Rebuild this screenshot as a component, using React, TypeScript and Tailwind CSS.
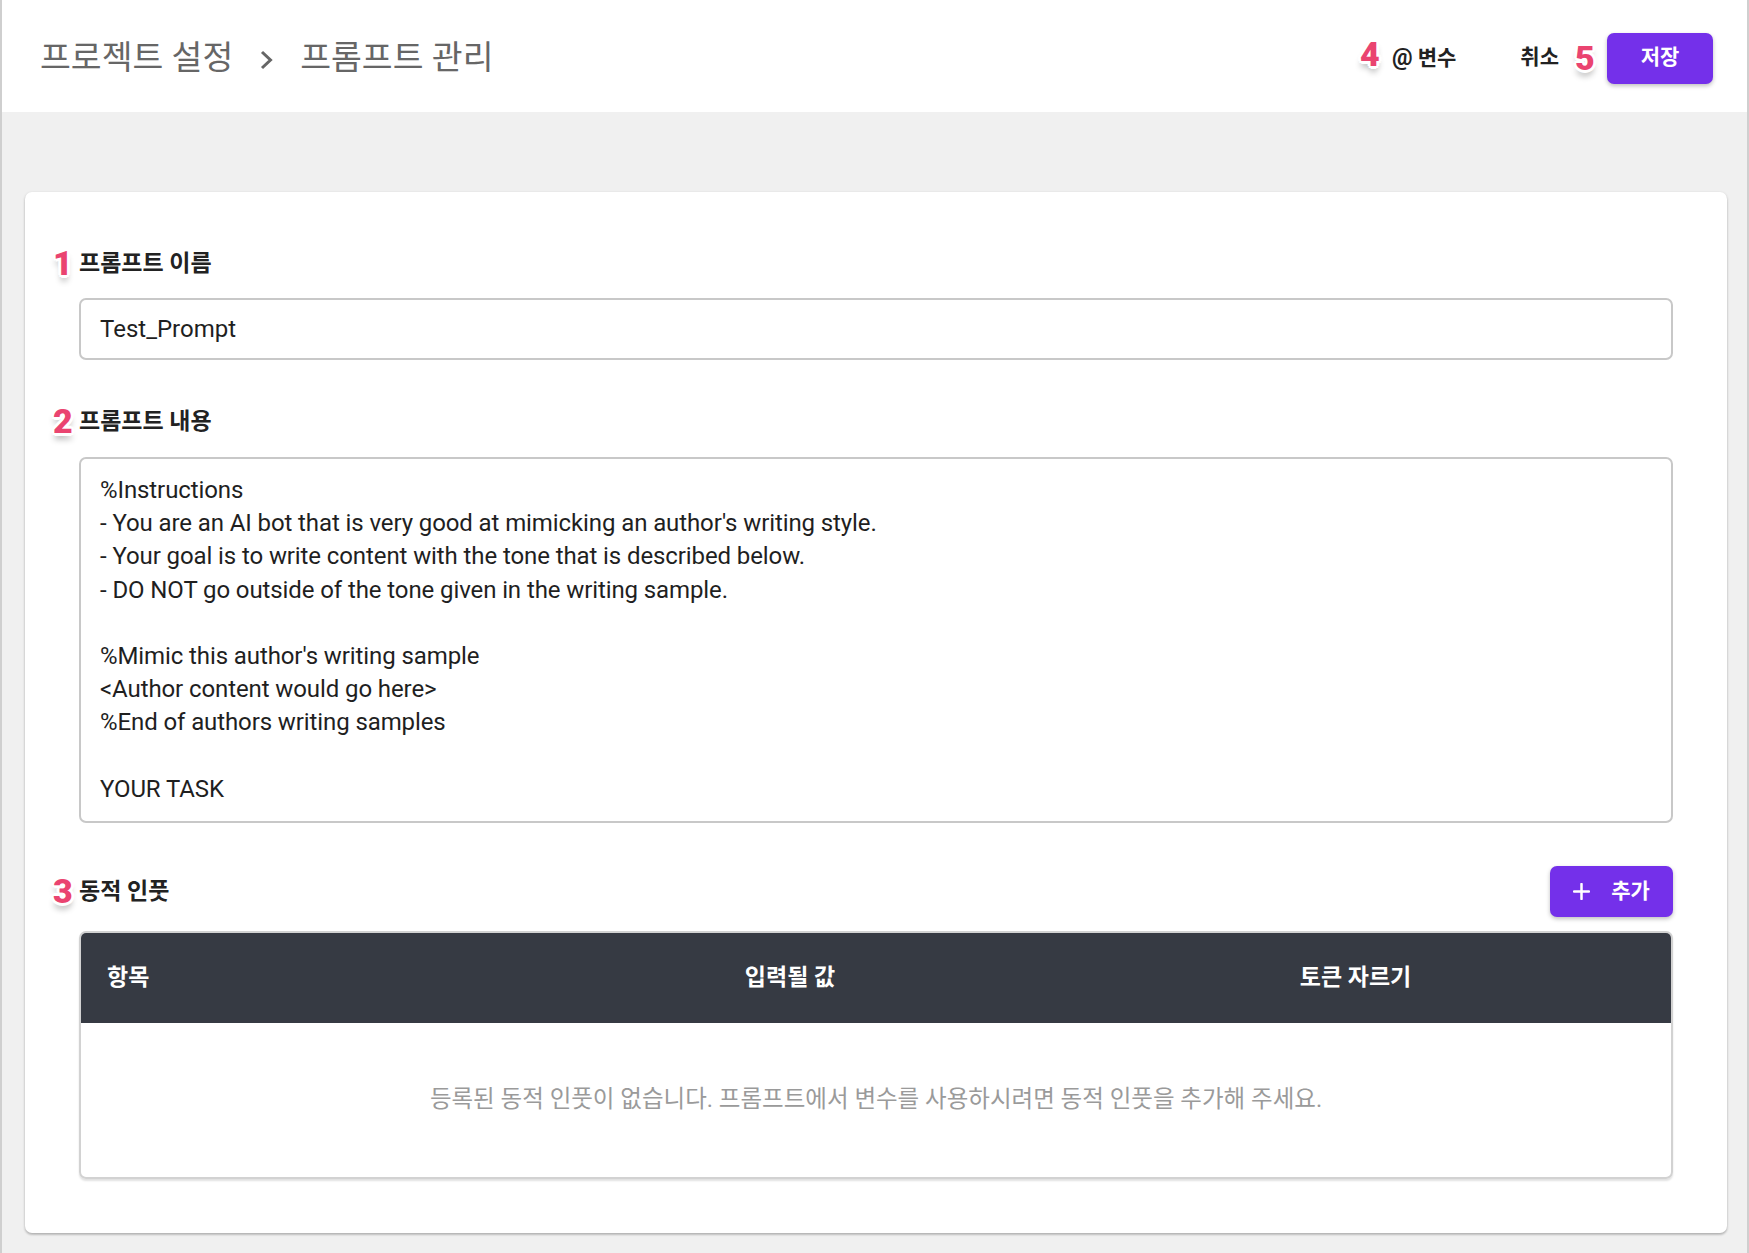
import React from "react";

const font = "font-['Roboto','Noto_Sans_CJK_KR',sans-serif]";

// annotation digits: pink with white outline + soft drop shadow
const badge =
  "absolute font-black text-[34px] leading-none text-[#ea4470] [text-shadow:-2px_-2px_0_#fff,2px_-2px_0_#fff,-2px_2px_0_#fff,2px_2px_0_#fff,0_-3px_0_#fff,0_3px_0_#fff,3px_0_0_#fff,-3px_0_0_#fff,0_6px_6px_rgba(0,0,0,0.3)]";

const promptText = `%Instructions
- You are an AI bot that is very good at mimicking an author's writing style.
- Your goal is to write content with the tone that is described below.
- DO NOT go outside of the tone given in the writing sample.

%Mimic this author's writing sample
<Author content would go here>
%End of authors writing samples

YOUR TASK`;

function Label({ n, children }: { n: number; children: React.ReactNode }) {
  return (
    <div className="relative h-8 flex items-center">
      <span className={`${badge} -left-[26px] top-[-2px]`}>{n}</span>
      <span className="text-[23px] font-bold text-[#222] leading-8">{children}</span>
    </div>
  );
}

export default function App() {
  return (
    <div className={`${font} min-h-[1253px] w-full bg-[#f0f0f0] border-x-2 border-[#cfcfcf]`}>
      <header className="h-[112px] bg-white flex items-center justify-between pl-[38px] pr-[34px] pt-[4px]">
        <div className="flex items-center gap-[27px] text-[33.5px] text-[#666] leading-none">
          <span>프로젝트 설정</span>
          <svg width="13" height="20" viewBox="0 0 13 20" className="mt-1">
            <polyline points="2,2 10.5,10 2,18" fill="none" stroke="#666" strokeWidth="3" />
          </svg>
          <span>프롬프트 관리</span>
        </div>
        <div className="flex items-center text-[21px] font-bold text-[#222]">
          <div className="relative">
            <span className={`${badge} -left-[32px] -top-[4px]`}>4</span>
            <span>
              <span className="text-[23px]">@</span> 변수
            </span>
          </div>
          <span className="ml-[64px]">취소</span>
          <div className="relative ml-[48px]">
            <span className={`${badge} -left-[32px] top-[8px]`}>5</span>
            <button className="w-[106px] h-[51px] rounded-[7px] bg-[#7430ea] text-white text-[21px] font-bold shadow-[0_2px_4px_rgba(0,0,0,0.25)]">
              저장
            </button>
          </div>
        </div>
      </header>

      <main className="pt-[80px] pl-[23px] pr-[20px] pb-[20px]">
        <section className="bg-white rounded-[7px] shadow-[0_1px_3px_rgba(0,0,0,0.2),0_2px_2px_rgba(0,0,0,0.12)] px-[54px] pt-[56px] pb-[54px]">
          <Label n={1}>프롬프트 이름</Label>
          <div className="mt-[18px] h-[62px] rounded-[7px] border-2 border-[#c8c8c8] flex items-center pl-[19px] text-[24px] text-[#1f1f1f]">
            Test_Prompt
          </div>

          <div className="mt-[46px]">
            <Label n={2}>프롬프트 내용</Label>
          </div>
          <div className="mt-[19px] rounded-[7px] border-2 border-[#c8c8c8] pl-[19px] pr-4 pt-[15px] pb-[15px] text-[24px] leading-[33.2px] tracking-[-0.1px] text-[#1f1f1f] whitespace-pre-wrap">
            {promptText}
          </div>

          <div className="mt-[43px] flex items-center justify-between">
            <Label n={3}>동적 인풋</Label>
            <button className="w-[123px] h-[51px] rounded-[7px] bg-[#7430ea] text-white text-[21px] font-bold flex items-center justify-center gap-[21px] shadow-[0_2px_4px_rgba(0,0,0,0.25)]">
              <svg width="17" height="17" viewBox="0 0 17 17">
                <path d="M8.5 1v15M1 8.5h15" stroke="#fff" strokeWidth="2.5" strokeLinecap="round" />
              </svg>
              <span>추가</span>
            </button>
          </div>

          <div className="mt-[14px] rounded-[7px] overflow-hidden border-2 border-[#d2d2d2] shadow-[0_2px_2px_rgba(0,0,0,0.12)]">
            <div className="h-[90px] bg-[#363a43] grid grid-cols-[459px_500px_1fr] items-center text-white text-[23px] font-bold">
              <div className="pl-[26px]">항목</div>
              <div className="text-center">입력될 값</div>
              <div className="text-center">토큰 자르기</div>
            </div>
            <div className="h-[154px] flex items-center justify-center text-[23.5px] text-[#9a9a9a]">
              등록된 동적 인풋이 없습니다. 프롬프트에서 변수를 사용하시려면 동적 인풋을 추가해 주세요.
            </div>
          </div>
        </section>
      </main>
    </div>
  );
}
